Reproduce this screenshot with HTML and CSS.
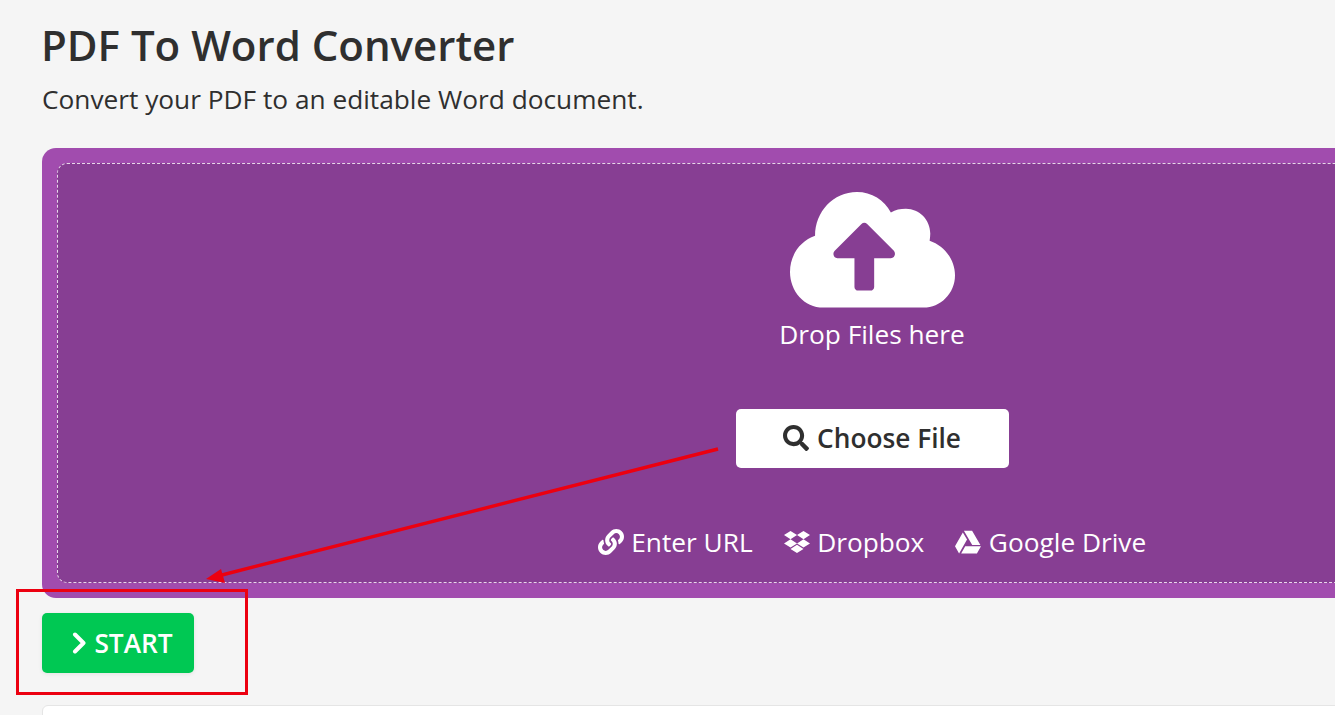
FILE: index.html
```html
<!DOCTYPE html>
<html lang="en">
<head>
<meta charset="utf-8">
<title>PDF To Word Converter</title>
<link rel="stylesheet" href="styles.css">
</head>
<body>
<main class="page">
  <h1 class="title">PDF To Word Converter</h1>
  <p class="subtitle">Convert your PDF to an editable Word document.</p>
  <section class="panel">
    <div class="dropzone">
      <svg class="cloud" viewBox="90 66 494 347" aria-hidden="true">
        <path class="cloud-body" d="M190 412C132 412 90 362 90 305C90 255 120 213 165 197C165 125 220 66 290 66C335 66 372 90 392 127C406 119 420 116 437 116C478 116 510 150 510 190C510 198 509 205 508 212C552 227 584 268 584 315C584 370 540 412 490 412Z"/>
        <path class="cloud-arrow" d="M304 162C309 157 316 157 321 162L401 242C408 250 403 264 392 264H342V350C342 356 337 361 331 361H294C288 361 283 356 283 350V264H232C221 264 216 250 224 242Z"/>
      </svg>
      <p class="drop-text">Drop Files here</p>
      <button class="choose" type="button">
        <svg class="search" viewBox="0 0 512 512" aria-hidden="true"><path d="M505 442.700L405.300 343c-4.500-4.500-10.600-7-17-7H372c27.600-35.300 44-79.700 44-128C416 93.100 322.900 0 208 0S0 93.100 0 208s93.100 208 208 208c48.300 0 92.700-16.400 128-44v16.300c0 6.400 2.500 12.500 7 17l99.700 99.700c9.400 9.400 24.600 9.400 33.900 0l28.300-28.300c9.400-9.400 9.400-24.600.1-34zM208 336c-70.700 0-128-57.200-128-128 0-70.700 57.200-128 128-128 70.700 0 128 57.200 128 128 0 70.700-57.200 128-128 128z"/></svg>
        <span class="choose-label">Choose File</span>
      </button>
      <div class="sources">
        <a class="source">
          <svg class="src-icon" viewBox="0 0 512 512" aria-hidden="true"><path d="M326.612 185.391c59.747 59.809 58.927 155.698.36 214.59-.11.12-.24.25-.36.37l-67.2 67.2c-59.27 59.27-155.699 59.262-214.96 0-59.27-59.26-59.27-155.7 0-214.96l37.106-37.106c9.84-9.84 26.786-3.3 27.294 10.606.648 17.722 3.826 35.527 9.69 52.721 1.986 5.822.567 12.262-3.783 16.612l-13.087 13.087c-28.026 28.026-28.905 73.66-1.155 101.96 28.024 28.579 74.086 28.749 102.325.51l67.2-67.19c28.191-28.191 28.073-73.757 0-101.83-3.701-3.694-7.429-6.564-10.341-8.569a16.037 16.037 0 0 1-6.947-12.606c-.396-10.567 3.348-21.456 11.698-29.806l21.054-21.055c5.521-5.521 14.182-6.199 20.584-1.731a152.482 152.482 0 0 1 20.522 17.197zM467.547 44.449c-59.261-59.262-155.69-59.27-214.96 0l-67.2 67.2c-.12.12-.25.25-.36.37-58.566 58.892-59.387 154.781.36 214.59a152.454 152.454 0 0 0 20.521 17.196c6.402 4.468 15.064 3.789 20.584-1.731l21.054-21.055c8.35-8.35 12.094-19.239 11.698-29.806a16.037 16.037 0 0 0-6.947-12.606c-2.912-2.005-6.64-4.875-10.341-8.569-28.073-28.073-28.191-73.639 0-101.83l67.2-67.19c28.239-28.239 74.3-28.069 102.325.51 27.75 28.3 26.872 73.934-1.155 101.96l-13.087 13.087c-4.35 4.35-5.769 10.79-3.783 16.612 5.864 17.194 9.042 34.999 9.69 52.721.509 13.906 17.454 20.446 27.294 10.606l37.106-37.106c59.271-59.259 59.271-155.699.001-214.959z"/></svg>
          Enter URL
        </a>
        <a class="source">
          <svg class="src-icon" viewBox="0 0 528 512" aria-hidden="true"><path d="M264.400 116.300l-132 84.300 132 84.300-132 84.300L0 284.100l132.300-84.300L0 116.300 132.300 32l132.100 84.300zM131.600 395.700l132-84.300 132 84.300-132 84.300-132-84.300zm132.800-111.600l132-84.300-132-83.600L395.700 32 528 116.300l-132.300 84.300L528 284.800l-132.300 84.300-131.300-85z"/></svg>
          Dropbox
        </a>
        <a class="source">
          <svg class="src-icon" viewBox="0 0 512 512" aria-hidden="true"><path d="M339 314.900L175.400 32h161.200l163.600 282.900H339zm-137.500 23.600L120.900 480h310.500L512 338.500H201.500zM154.100 67.400L0 338.500 80.600 480 237 208.800 154.100 67.400z"/></svg>
          Google Drive
        </a>
      </div>
    </div>
  </section>
  <button class="start" type="button">
    <svg class="chev" viewBox="0 0 15 22" aria-hidden="true"><polyline points="3,2.500 11.500,11 3,19.500"/></svg>
    <span class="start-label">START</span>
  </button>
  <section class="card"></section>
</main>
<svg class="annotation" width="1335" height="715" viewBox="0 0 1335 715" aria-hidden="true">
  <rect class="note-box" x="17.500" y="590.500" width="229" height="103"/>
  <line class="note-line" x1="718" y1="449" x2="218" y2="576"/>
  <polygon class="note-head" points="206,579 221,569 225,583"/>
</svg>
</body>
</html>
```
FILE: styles.css
```css
html, body {
  margin: 0;
  height: 715px;
  overflow: hidden;
  background: #f5f5f5;
}
body {
  position: relative;
  font-family: "Open Sans", "Liberation Sans", sans-serif;
  color: #2f2f2f;
}
.page {
  width: 1660px;
  padding: 0 0 0 42px;
}
.title {
  margin: 0 0 0 -1px;
  padding-top: 17px;
  font-size: 42px;
  line-height: 55px;
  font-weight: 600;
  color: #2f2f2f;
}
.subtitle {
  margin: 0;
  padding-top: 8px;
  font-size: 26.250px;
  line-height: 38px;
  height: 39px;
}
.panel {
  margin-top: 29px;
  width: 1660px;
  height: 450px;
  box-sizing: border-box;
  padding: 15px;
  background: #a14cae;
  border-radius: 14px;
}
.dropzone {
  height: 420px;
  box-sizing: border-box;
  border: 1px dashed #e8d8ea;
  border-radius: 10px;
  background: #873e93;
  display: flex;
  flex-direction: column;
  align-items: center;
  padding-top: 28px;
  color: #fff;
}
.cloud {
  width: 165px;
  height: 116px;
  display: block;
}
.cloud-body { fill: #fff; }
.cloud-arrow { fill: #873e93; }
.drop-text {
  margin: 9px 0 0;
  font-size: 26.250px;
  line-height: 34px;
}
.choose {
  margin-top: 58px;
  width: 273px;
  height: 59px;
  padding: 0 0 2px;
  border: 0;
  border-radius: 5px;
  background: #fff;
  color: #2f2f2f;
  font-family: inherit;
  font-size: 26.250px;
  font-weight: 600;
  display: flex;
  align-items: center;
  justify-content: center;
  gap: 8px;
}
.search {
  width: 26px;
  height: 26px;
  fill: #2f2f2f;
}
.sources {
  margin-top: 57px;
  display: flex;
  gap: 31px;
  font-size: 26.250px;
  line-height: 34px;
}
.source {
  display: flex;
  align-items: center;
  gap: 7.500px;
  color: #fff;
}
.src-icon {
  width: 26px;
  height: 26px;
  fill: #fff;
}
.start {
  margin-top: 15px;
  width: 152px;
  height: 60px;
  padding: 0 0 0 9px;
  border: 0;
  border-radius: 5px;
  background: #00c853;
  color: #fff;
  font-family: inherit;
  font-size: 26.250px;
  font-weight: 600;
  display: flex;
  align-items: center;
  justify-content: center;
  gap: 7px;
  box-shadow: 0 1px 4px rgba(0, 0, 0, .08);
}
.chev {
  width: 15px;
  height: 22px;
  fill: none;
  stroke: #fff;
  stroke-width: 4;
  stroke-linecap: round;
  stroke-linejoin: round;
}
.card {
  margin-top: 32px;
  height: 60px;
  background: #fff;
  border: 1px solid #e5e5e5;
  border-radius: 6px;
}
.annotation {
  position: absolute;
  left: 0;
  top: 0;
}
.note-box {
  fill: none;
  stroke: #ec0010;
  stroke-width: 3;
}
.note-line {
  stroke: #ec0010;
  stroke-width: 3.400;
}
.note-head { fill: #ec0010; }
```
